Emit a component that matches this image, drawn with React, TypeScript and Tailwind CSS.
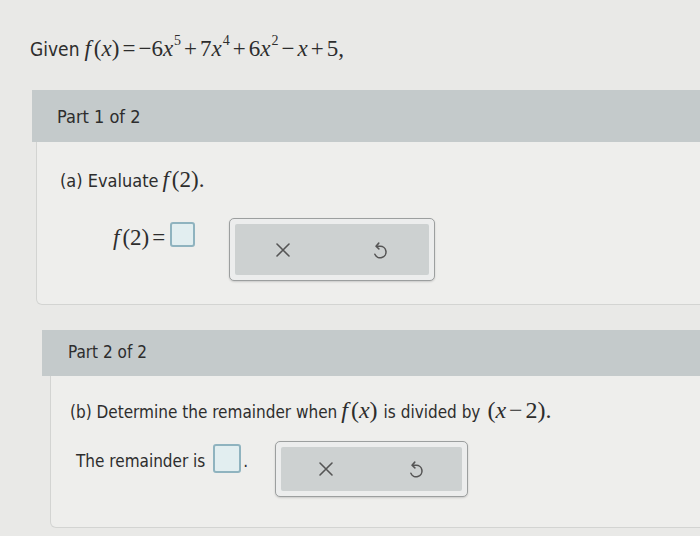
import React from "react";

const sans = { fontFamily: '"DejaVu Sans Condensed", "DejaVu Sans", Verdana, sans-serif' };
const serif = { fontFamily: '"Liberation Serif", "Times New Roman", serif' };

function XIcon() {
  return (
    <svg width="16" height="16" viewBox="0 0 16 16" fill="none" stroke="#555" strokeWidth="1.6" strokeLinecap="round">
      <path d="M2 2 L14 14 M14 2 L2 14" />
    </svg>
  );
}

function UndoIcon() {
  return (
    <svg width="18" height="20" viewBox="0 0 16 18" fill="none" stroke="#555" strokeWidth="1.4" strokeLinecap="round" strokeLinejoin="round">
      <path d="M3.4 12.8 A5.2 5.2 0 1 0 8 5.6 H5.3" />
      <path d="M6.9 2.8 L4.4 5.6 L7 8" />
    </svg>
  );
}

function ButtonGroup({ w, h, px }: { w: string; h: string; px: string }) {
  return (
    <div className={`${w} ${h} rounded-[5px] border border-[#9c9f9f] bg-[#eceded] p-[5px] shadow-[0_1px_2px_rgba(0,0,0,0.15)]`}>
      <div className={`w-full h-full bg-[#cdd1d1] rounded-[2px] flex items-center justify-between ${px}`}>
        <XIcon />
        <UndoIcon />
      </div>
    </div>
  );
}

function Box({ w, h }: { w: string; h: string }) {
  return <span className={`inline-block ${w} ${h} border-2 border-[#8fb3bf] rounded-[3px] bg-[#e2eef0]`} />;
}

function Op({ c }: { c: string }) {
  return <span className="mx-[3px]">{c}</span>;
}

function Sup({ c }: { c: string }) {
  return <span className="text-[14px] relative -top-[11px] ml-[1px]">{c}</span>;
}

function F() {
  return <i className="mr-[3px]">f</i>;
}

export default function App() {
  return (
    <div className="w-[700px] h-[536px] overflow-hidden bg-[#e9e9e7] text-[#2d2d2d]" style={sans}>
      <div className="pt-[32px] pl-[30px] h-[90px]">
        <div className="flex items-baseline h-[30px]">
          <span className="text-[19px] mr-[5px]">Given</span>
          <span className="text-[23px] whitespace-nowrap" style={serif}>
            <F />(<i>x</i>)<Op c="=" />−6<i>x</i><Sup c="5" /><Op c="+" />7<i>x</i><Sup c="4" /><Op c="+" />6<i>x</i><Sup c="2" /><Op c="−" /><i>x</i><Op c="+" />5,
          </span>
        </div>
      </div>

      <div className="ml-[32px] w-[700px]">
        <div className="h-[52px] bg-[#c4cacb] flex items-center pl-[25px] text-[18px]">Part 1 of 2</div>
        <div className="h-[163px] bg-[#eeeeec] border border-t-0 border-[#d3d4d2] rounded-b-[6px] ml-[4px] pl-[23px] pt-[21px]">
          <div className="flex items-baseline text-[18px] h-[26px]">
            <span>(a) Evaluate</span>
            <span className="ml-[4px] text-[23px]" style={serif}><F />(2).</span>
          </div>
          <div className="flex items-start mt-[29px]">
            <div className="flex items-center mt-[7px] h-[26px]">
              <span className="ml-[53px] text-[23px]" style={serif}><F />(2)<Op c="=" /></span>
              <span className="ml-[2px]"><Box w="w-[25px]" h="h-[25px]" /></span>
            </div>
            <div className="ml-[34px]"><ButtonGroup w="w-[206px]" h="h-[63px]" px="px-[40px]" /></div>
          </div>
        </div>
      </div>

      <div className="ml-[42px] mt-[25px] w-[700px]">
        <div className="h-[46px] bg-[#c4cacb] flex items-center pl-[26px] text-[17px]">Part 2 of 2</div>
        <div className="h-[152px] bg-[#eeeeec] border border-t-0 border-[#d3d4d2] rounded-b-[6px] ml-[8px] pl-[19px] pt-[16px]">
          <div className="flex items-baseline text-[17px] h-[26px]">
            <span>(b) Determine the remainder when</span>
            <span className="ml-[4px] text-[24px]" style={serif}><F />(<i>x</i>)</span>
            <span className="ml-[6px]">is divided by</span>
            <span className="ml-[7px] text-[24px]" style={serif}>(<i>x</i><Op c="−" />2).</span>
          </div>
          <div className="flex items-start mt-[23px]">
            <div className="flex items-center mt-[6px] h-[30px]">
              <span className="ml-[6px] text-[17px]">The remainder is</span>
              <span className="ml-[8px]"><Box w="w-[28px]" h="h-[29px]" /></span>
              <span className="text-[17px] ml-[2px]">.</span>
            </div>
            <div className="ml-[27px]"><ButtonGroup w="w-[193px]" h="h-[56px]" px="px-[37px]" /></div>
          </div>
        </div>
      </div>
    </div>
  );
}
